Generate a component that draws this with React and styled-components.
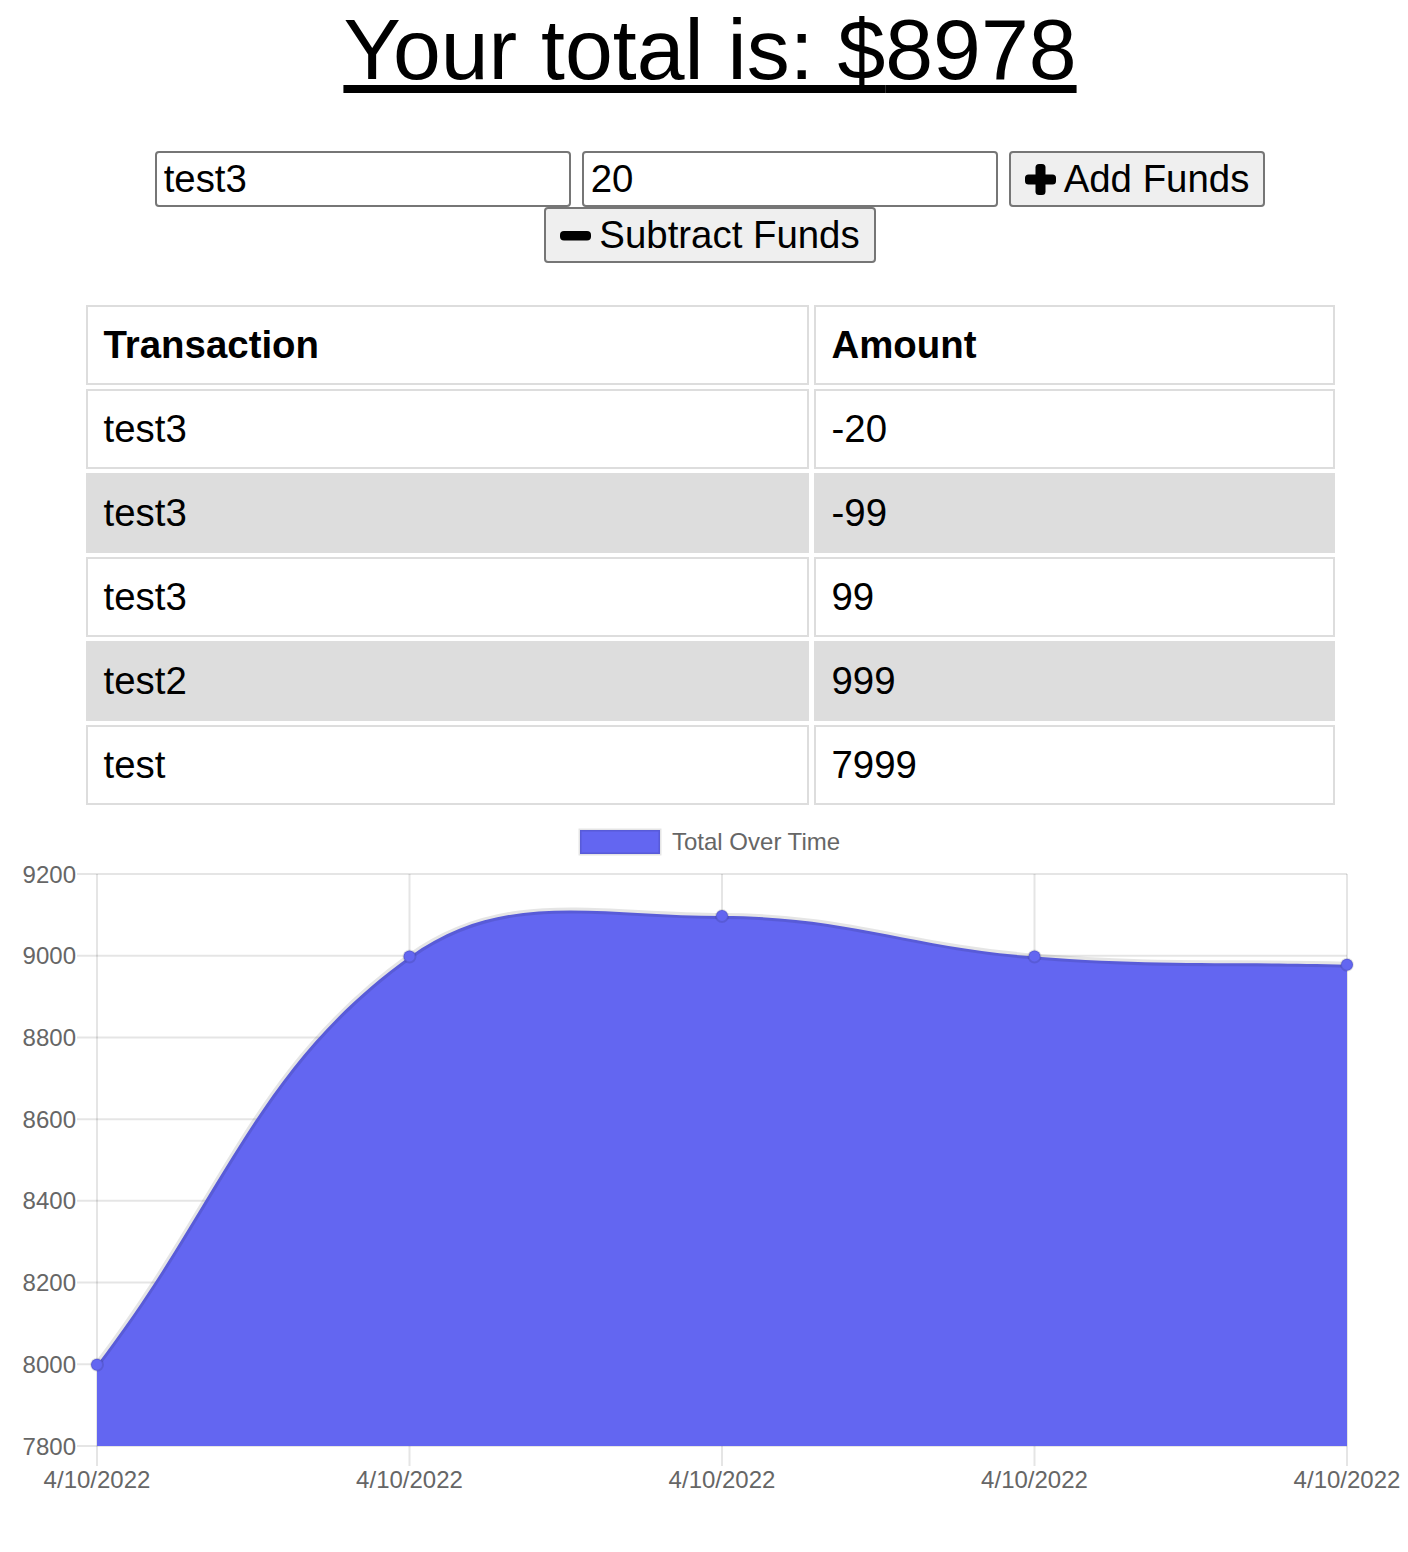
import React, { useState } from "react"
import styled, { createGlobalStyle } from "styled-components"

const GlobalStyle = createGlobalStyle`
  body {
    margin: 0;
    background: #ffffff;
    font-family: "Liberation Sans", Arial, Helvetica, sans-serif;
    color: #000000;
  }
`

const Page = styled.div`
  padding-left: 12px;
`

const Total = styled.h1`
  margin: 0;
  text-align: center;
  font-size: 86px;
  font-weight: normal;
  line-height: normal;
  text-decoration: underline;
  text-decoration-thickness: 8px;
  text-underline-offset: 6px;
`

const FundsForm = styled.form`
  display: flex;
  flex-wrap: wrap;
  justify-content: center;
  column-gap: 11px;
  row-gap: 0;
  margin: 52px 0 0;
`

const TextInput = styled.input`
  box-sizing: border-box;
  width: 416px;
  height: 56px;
  padding: 2px 7px;
  border: 2px solid #767676;
  border-radius: 4px;
  font: inherit;
  font-size: 38.4px;
  color: #000000;
  background: #ffffff;
  outline: none;
`

const FundsButton = styled.button`
  box-sizing: border-box;
  display: flex;
  align-items: center;
  gap: 8px;
  height: 56px;
  padding: 0 14px;
  border: 2px solid #767676;
  border-radius: 4px;
  background: #efefef;
  font: inherit;
  font-size: 38.4px;
  color: #000000;
  cursor: pointer;
`

const Ledger = styled.table`
  border-collapse: separate;
  border-spacing: 5px 4px;
  table-layout: fixed;
  width: 1259px;
  margin: 38px auto 0;
  font-size: 38.4px;
`

const HeadCell = styled.th`
  box-sizing: border-box;
  width: ${(props) => props.width}px;
  padding: 16px;
  line-height: 44px;
  border: 2px solid #dddddd;
  text-align: left;
  font-weight: bold;
`

const Row = styled.tr`
  background: ${(props) => (props.striped ? "#dddddd" : "#ffffff")};
`

const Cell = styled.td`
  padding: 16px;
  line-height: 44px;
  border: 2px solid #dddddd;
`

const ChartCanvas = styled.svg`
  display: block;
  font-family: "Liberation Sans", Arial, Helvetica, sans-serif;
`

const PlusIcon = () => (
  <svg width="31" height="31" viewBox="0 0 31 31">
    <rect x="10.5" y="0" width="10" height="31" rx="3.5" fill="#000" />
    <rect x="0" y="10.5" width="31" height="10" rx="3.5" fill="#000" />
  </svg>
)

const MinusIcon = () => (
  <svg width="31" height="31" viewBox="0 0 31 31">
    <rect x="0" y="11" width="31" height="9.5" rx="4" fill="#000" />
  </svg>
)

const transactions = [
  { name: "test3", value: -20 },
  { name: "test3", value: -99 },
  { name: "test3", value: 99 },
  { name: "test2", value: 999 },
  { name: "test", value: 7999 },
]

const FILL = "#6366f1"
const GRID = "rgba(0,0,0,0.1)"
const area = { left: 97, right: 1347, top: 873, bottom: 1445, min: 7800, max: 9200 }
const yTicks = [9200, 9000, 8800, 8600, 8400, 8200, 8000, 7800]

const yOf = (v) =>
  area.bottom - ((v - area.min) / (area.max - area.min)) * (area.bottom - area.top)

// chart.js style spline with tension 0.4
const buildCurve = (points) => {
  const ctrl = points.map((cur, i) => {
    const prev = points[i - 1] || cur
    const next = points[i + 1] || cur
    const d01 = Math.hypot(cur.x - prev.x, cur.y - prev.y)
    const d12 = Math.hypot(next.x - cur.x, next.y - cur.y)
    let s01 = d01 / (d01 + d12)
    let s12 = d12 / (d01 + d12)
    if (isNaN(s01)) s01 = 0
    if (isNaN(s12)) s12 = 0
    const fa = 0.4 * s01
    const fb = 0.4 * s12
    return {
      before: { x: cur.x - fa * (next.x - prev.x), y: cur.y - fa * (next.y - prev.y) },
      after: { x: cur.x + fb * (next.x - prev.x), y: cur.y + fb * (next.y - prev.y) },
    }
  })
  let d = `M ${points[0].x} ${points[0].y}`
  for (let i = 1; i < points.length; i++) {
    const a = ctrl[i - 1].after
    const b = ctrl[i].before
    d += ` C ${a.x} ${a.y} ${b.x} ${b.y} ${points[i].x} ${points[i].y}`
  }
  return d
}

const TotalChart = ({ values }) => {
  const step = (area.right - area.left) / (values.length - 1)
  const points = values.map((v, i) => ({ x: area.left + i * step, y: yOf(v) }))
  const curve = buildCurve(points)
  const fillPath = `${curve} L ${area.right} ${area.bottom} L ${area.left} ${area.bottom} Z`

  return (
    <ChartCanvas width="1408" height="744" viewBox="0 808 1408 744">
      <rect x="580" y="829" width="80" height="24" fill={FILL} stroke={GRID} strokeWidth="3" />
      <text x="672" y="849" fontSize="24" fill="#666666">
        Total Over Time
      </text>

      {yTicks.map((t) => (
        <g key={t}>
          <line x1="77" x2={area.right} y1={yOf(t)} y2={yOf(t)} stroke={GRID} strokeWidth="2" />
          <text x="76" y={yOf(t) + 8.5} fontSize="24" fill="#666666" textAnchor="end">
            {t}
          </text>
        </g>
      ))}
      {points.map((p, i) => (
        <g key={i}>
          <line x1={p.x} x2={p.x} y1={area.top} y2={area.bottom + 20} stroke={GRID} strokeWidth="2" />
          <text x={p.x} y="1487" fontSize="24" fill="#666666" textAnchor="middle">
            4/10/2022
          </text>
        </g>
      ))}

      <path d={fillPath} fill={FILL} />
      <path d={curve} fill="none" stroke={GRID} strokeWidth="6" />
      {points.map((p, i) => (
        <circle key={i} cx={p.x} cy={p.y} r="6" fill={FILL} stroke={GRID} strokeWidth="2" />
      ))}
    </ChartCanvas>
  )
}

const App = () => {
  const [name, setName] = useState("test3")
  const [amount, setAmount] = useState("20")

  const total = transactions.reduce((sum, t) => sum + t.value, 0)
  const running = []
  transactions
    .slice()
    .reverse()
    .reduce((sum, t) => {
      running.push(sum + t.value)
      return sum + t.value
    }, 0)

  return (
    <>
      <GlobalStyle />
      <Page>
        <Total>Your total is: ${total}</Total>
        <FundsForm onSubmit={(e) => e.preventDefault()}>
          <TextInput value={name} onChange={(e) => setName(e.target.value)} />
          <TextInput value={amount} onChange={(e) => setAmount(e.target.value)} />
          <FundsButton type="button">
            <PlusIcon />
            Add Funds
          </FundsButton>
          <FundsButton type="button">
            <MinusIcon />
            Subtract Funds
          </FundsButton>
        </FundsForm>
        <Ledger>
          <thead>
            <tr>
              <HeadCell width={723}>Transaction</HeadCell>
              <HeadCell width={521}>Amount</HeadCell>
            </tr>
          </thead>
          <tbody>
            {transactions.map((t, i) => (
              <Row key={i} striped={i % 2 === 1}>
                <Cell>{t.name}</Cell>
                <Cell>{t.value}</Cell>
              </Row>
            ))}
          </tbody>
        </Ledger>
      </Page>
      <TotalChart values={running} />
    </>
  )
}

export default App
